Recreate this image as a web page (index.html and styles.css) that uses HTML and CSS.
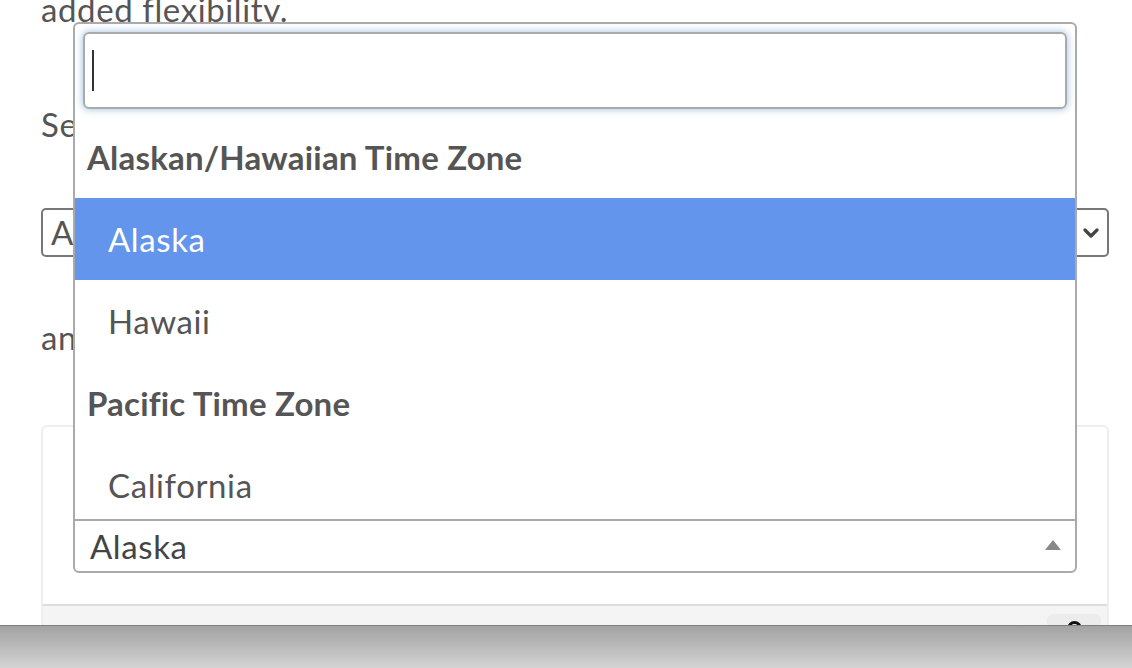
FILE: index.html
```html
<!DOCTYPE html>
<html lang="en">
<head>
<meta charset="utf-8">
<title>Select2 demo</title>
<link rel="stylesheet" href="styles.css">
</head>
<body>
<div class="page">
  <p class="para first">added flexibility.</p>
  <p class="para second">Select a state</p>
  <div class="native-select">
    <span class="native-value">Alaska</span>
    <svg class="chev" viewBox="0 0 16 10" width="16" height="10"><path d="M2 2 L8 8 L14 2" fill="none" stroke="#444" stroke-width="3.2" stroke-linecap="round" stroke-linejoin="round"/></svg>
  </div>
  <p class="para third">and more</p>
  <div class="card">
    <div class="card-body">
      <div class="label-space"></div>
      <div class="s2-selection">
        <span class="s2-rendered">Alaska</span>
        <span class="s2-arrow"></span>
      </div>
    </div>
    <div class="card-footer">
      <div class="footer-btn"><span class="footer-icon"></span></div>
    </div>
  </div>
</div>

<div class="s2-dropdown">
  <div class="s2-search-wrap">
    <div class="s2-search"><span class="caret"></span></div>
  </div>
  <ul class="s2-results">
    <li class="s2-group">Alaskan/Hawaiian Time Zone</li>
    <li class="s2-option highlighted">Alaska</li>
    <li class="s2-option">Hawaii</li>
    <li class="s2-group">Pacific Time Zone</li>
    <li class="s2-option">California</li>
    <li class="s2-option">Nevada</li>
  </ul>
</div>

<div class="os-bar"></div>
</body>
</html>
```

FILE: styles.css
```css
html, body {
  margin: 0;
  padding: 0;
  background: #fff;
  overflow: hidden;
  height: 100%;
}
body {
  font-family: Lato, "Open Sans", sans-serif;
  color: #555;
  font-size: 33px;
  letter-spacing: 0.6px;
}
.page {
  padding: 0 23px 0 41px;
}
.para {
  margin: 0;
  line-height: 54px;
}
.first { margin-top: -18px; margin-bottom: 61px; }
.second { margin-bottom: 57px; }
.native-select {
  height: 49px;
  box-sizing: border-box;
  border: 2px solid #777;
  border-radius: 5px;
  display: flex;
  align-items: center;
  justify-content: space-between;
  padding: 0 8px 0 8px;
}
.native-value { line-height: 1; }
.third { margin-top: 53px; margin-bottom: 61px; }
.card {
  border: 2px solid #eee;
  border-radius: 6px;
  overflow: hidden;
}
.card-body {
  padding: 0 30px 31px 30px;
}
.label-space { height: 92px; }
.s2-selection {
  height: 54px;
  box-sizing: border-box;
  border: 2px solid #aaa;
  border-radius: 0 0 6px 6px;
  display: flex;
  align-items: center;
  justify-content: space-between;
  padding: 0 14px 0 15px;
  color: #444;
}
.s2-rendered { line-height: 1; }
.s2-arrow {
  width: 0;
  height: 0;
  border-left: 8px solid transparent;
  border-right: 8px solid transparent;
  border-bottom: 10px solid #888;
  margin-top: -2px;
}
.card-footer {
  border-top: 2px solid #ddd;
  background: #f4f4f4;
  height: 80px;
  display: flex;
  justify-content: flex-end;
  padding: 8px 6px 0 0;
  box-sizing: border-box;
}
.footer-btn {
  width: 54px;
  height: 40px;
  background: #ececec;
  border-radius: 6px;
  display: flex;
  justify-content: center;
  padding-top: 7px;
  box-sizing: border-box;
}
.footer-icon {
  width: 9px;
  height: 9px;
  border: 3px solid #111;
  border-radius: 50%;
}

/* dropdown overlay */
.s2-dropdown {
  position: absolute;
  left: 73px;
  top: 22px;
  width: 1004px;
  height: 497px;
  box-sizing: border-box;
  border: 2px solid #aaa;
  border-bottom: none;
  border-radius: 6px 6px 0 0;
  background: #fff;
  overflow: hidden;
  display: flex;
  flex-direction: column;
}
.s2-search-wrap {
  padding: 8px 8px 7px 8px;
}
.s2-search {
  height: 77px;
  box-sizing: border-box;
  border: 2px solid #aaa;
  border-radius: 6px;
  box-shadow: 0 0 7px 1px rgba(110, 160, 205, 0.55);
  display: flex;
  align-items: center;
  padding-left: 7px;
}
.caret {
  width: 2px;
  height: 41px;
  background: #333;
}
.s2-results {
  list-style: none;
  margin: 0;
  padding: 0;
  overflow: hidden;
  flex: 1;
}
.s2-group {
  height: 82px;
  line-height: 82px;
  padding-left: 12px;
  font-weight: bold;
  color: #555;
  letter-spacing: 0.2px;
}
.s2-option {
  height: 82px;
  line-height: 82px;
  padding-left: 33px;
  color: #555;
}
.s2-option.highlighted {
  background: #6495ed;
  color: #fff;
}

.os-bar {
  position: fixed;
  left: 0;
  right: 0;
  bottom: 0;
  height: 42px;
  border-top: 1px solid #7f7f7f;
  background: linear-gradient(#a2a2a2, #d4d4d4);
}
```
